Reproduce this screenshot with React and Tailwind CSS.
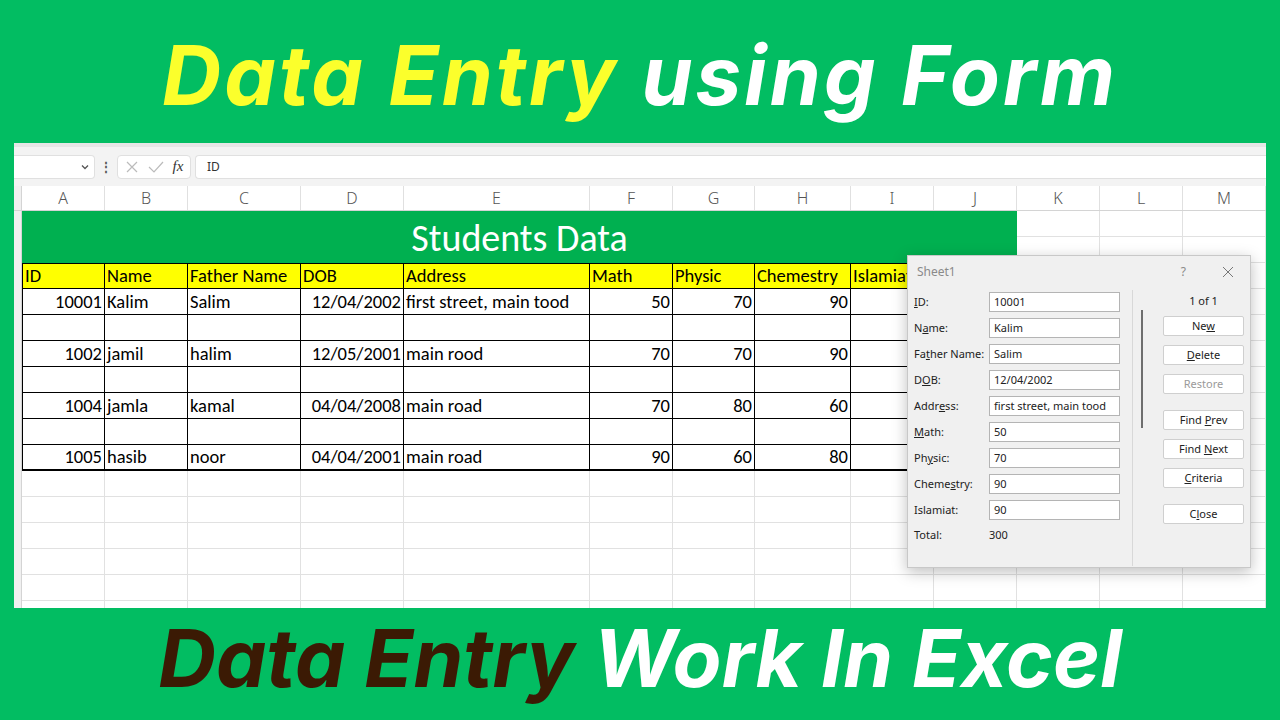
import React from "react";

const COLS = [
  { k: "A", w: 83 },
  { k: "B", w: 83 },
  { k: "C", w: 113 },
  { k: "D", w: 103 },
  { k: "E", w: 186 },
  { k: "F", w: 83 },
  { k: "G", w: 82 },
  { k: "H", w: 96 },
  { k: "I", w: 83 },
  { k: "J", w: 83 },
  { k: "K", w: 83 },
  { k: "L", w: 83 },
  { k: "M", w: 83 },
];

const HEAD = ["ID", "Name", "Father Name", "DOB", "Address", "Math", "Physic", "Chemestry", "Islamiat"];

const ROWS = [
  ["10001", "Kalim", "Salim", "12/04/2002", "first street, main tood", "50", "70", "90", ""],
  null,
  ["1002", "jamil", "halim", "12/05/2001", "main rood", "70", "70", "90", ""],
  null,
  ["1004", "jamla", "kamal", "04/04/2008", "main road", "70", "80", "60", ""],
  null,
  ["1005", "hasib", "noor", "04/04/2001", "main road", "90", "60", "80", ""],
];

const RIGHT = [0, 3, 5, 6, 7, 8];

const sheetFont = { fontFamily: "Carlito, Lato, 'Open Sans', sans-serif" };
const uiFont = { fontFamily: "'Noto Sans', 'Open Sans', sans-serif" };

function U({ children }) {
  return <span className="underline underline-offset-1">{children}</span>;
}

const FIELDS = [
  [<><U>I</U>D:</>, "10001"],
  [<>N<U>a</U>me:</>, "Kalim"],
  [<>Fa<U>t</U>her Name:</>, "Salim"],
  [<>D<U>O</U>B:</>, "12/04/2002"],
  [<>Addr<U>e</U>ss:</>, "first street, main tood"],
  [<><U>M</U>ath:</>, "50"],
  [<>Ph<U>y</U>sic:</>, "70"],
  [<>Cheme<U>s</U>try:</>, "90"],
  [<>Islamiat:</>, "90"],
];

function Btn({ children, disabled, className = "" }) {
  return (
    <div className={`w-[81px] h-[20px] bg-white border border-[#cfcfcf] rounded-[2px] flex items-center justify-center text-[11px] ${disabled ? "text-[#9a9a9a]" : "text-[#222]"} ${className}`}>
      <span className="whitespace-pre">{children}</span>
    </div>
  );
}

function DataForm() {
  return (
    <div className="absolute left-[893px] top-[112px] w-[344px] h-[313px] bg-[#f0f0f0] border border-[#c8c8c8] shadow-[0_4px_14px_rgba(0,0,0,0.25)]" style={uiFont}>
      <div className="h-[32px] flex items-center pl-[9px] pr-[16px] text-[12px] text-[#8a8a8a]">
        <span className="flex-1">Sheet1</span>
        <span className="mr-[36px]">?</span>
        <svg width="12" height="12" viewBox="0 0 12 12" className="stroke-[#777]" strokeWidth="1">
          <path d="M1 1 L11 11 M11 1 L1 11" />
        </svg>
      </div>
      <div className="flex">
        <div className="w-[224px] pl-[6px] pt-[4px] flex flex-col gap-[6px] text-[11px] text-[#222]">
          {FIELDS.map(([label, val], i) => (
            <div key={i} className="flex items-center h-[20px]">
              <div className="w-[75px] whitespace-nowrap">{label}</div>
              <div className="w-[131px] h-[20px] bg-white border border-[#b4b4b4] pl-[4px] flex items-center whitespace-nowrap overflow-hidden">{val}</div>
            </div>
          ))}
          <div className="flex items-center h-[20px] -mt-[1px]">
            <div className="w-[75px]">Total:</div>
            <div>300</div>
          </div>
        </div>
        <div className="w-px bg-[#d8d8d8] h-[276px] mt-[2px]" />
        <div className="w-[8px] relative">
          <div className="absolute left-[8px] top-[22px] w-[2px] h-[118px] bg-[#6e6e6e]" />
        </div>
        <div className="flex flex-col items-center pl-[22px] text-[11px] text-[#222]">
          <div className="h-[20px] mt-[3px] flex items-center">1 of 1</div>
          <Btn className="mt-[5px]">Ne<U>w</U></Btn>
          <Btn className="mt-[9px]"><U>D</U>elete</Btn>
          <Btn className="mt-[9px]" disabled>Restore</Btn>
          <Btn className="mt-[16px]">Find <U>P</U>rev</Btn>
          <Btn className="mt-[9px]">Find <U>N</U>ext</Btn>
          <Btn className="mt-[9px]"><U>C</U>riteria</Btn>
          <Btn className="mt-[16px]">C<U>l</U>ose</Btn>
        </div>
      </div>
    </div>
  );
}

function FormulaBar() {
  return (
    <div className="h-[43px] bg-[#f3f3f3] border-t-[4px] border-[#e6e6e6] flex items-center gap-[4px] text-[12px] text-[#333]" style={uiFont}>
      <div className="w-[81px] h-[24px] bg-white rounded-r-[4px] border border-l-0 border-[#e0e0e0] flex items-center justify-end pr-[4px]">
        <svg width="10" height="10" viewBox="0 0 10 10" fill="none" stroke="#555" strokeWidth="1.3"><path d="M2 3.5 L5 6.5 L8 3.5" /></svg>
      </div>
      <div className="w-[14px] flex justify-center text-[#555] font-bold">⋮</div>
      <div className="w-[74px] h-[24px] bg-white rounded-[4px] border border-[#e0e0e0] flex items-center justify-around px-[2px]">
        <svg width="14" height="14" viewBox="0 0 14 14" fill="none" stroke="#bbb" strokeWidth="1.2"><path d="M2 2 L12 12 M12 2 L2 12" /></svg>
        <svg width="16" height="14" viewBox="0 0 16 14" fill="none" stroke="#bbb" strokeWidth="1.2"><path d="M1 7 L6 12 L15 2" /></svg>
        <span className="italic text-[15px] text-[#333]" style={{ fontFamily: "'Liberation Serif', serif" }}>fx</span>
      </div>
      <div className="flex-1 h-[24px] bg-white rounded-l-[4px] border border-r-0 border-[#e0e0e0] flex items-center pl-[11px]">ID</div>
    </div>
  );
}

function ColHeaders() {
  return (
    <div className="flex h-[25px] bg-white border-b border-[#d4d4d4] text-[16px] text-[#555]" style={uiFont}>
      <div className="w-[8px] bg-[#f0f0f0] border-r border-[#d4d4d4]" />
      {COLS.map((c) => (
        <div key={c.k} style={{ width: c.w }} className="flex items-center justify-center border-r border-[#e0e0e0] font-light">{c.k}</div>
      ))}
    </div>
  );
}

function Grid() {
  return (
    <div className="text-[18.5px] text-black" style={sheetFont}>
      {/* Title row: merged A:J, two rows tall */}
      <div className="flex h-[52px]">
        <div className="w-[8px] bg-[#f0f0f0] border-r border-[#d4d4d4]" />
        <div className="w-[995px] bg-[#00b050] text-white text-[38px] flex items-center justify-center pt-[2px]">Students Data</div>
        <div className="flex flex-col">
          {[0, 1].map((r) => (
            <div key={r} className="flex h-[26px]">
              {COLS.slice(10).map((c) => (
                <div key={c.k} style={{ width: c.w }} className="border-r border-b border-[#e1e1e1]" />
              ))}
            </div>
          ))}
        </div>
      </div>
      {/* Header row */}
      <div className="flex h-[26px]">
        <div className="w-[8px] bg-[#f0f0f0] border-r border-[#d4d4d4]" />
        {COLS.map((c, i) =>
          i < 9 ? (
            <div key={c.k} style={{ width: c.w }} className={`bg-[#ffff00] border-t border-b border-r border-black flex items-center pl-[2px] whitespace-nowrap overflow-hidden ${i === 0 ? "border-l" : ""}`}>{HEAD[i]}</div>
          ) : (
            <div key={c.k} style={{ width: c.w }} className="border-r border-b border-[#e1e1e1]" />
          )
        )}
      </div>
      {ROWS.map((row, r) => (
        <div key={r} className="flex h-[26px]">
          <div className="w-[8px] bg-[#f0f0f0] border-r border-[#d4d4d4]" />
          {COLS.map((c, i) =>
            i < 9 ? (
              <div key={c.k} style={{ width: c.w }} className={`border-b border-r border-black flex items-center whitespace-nowrap overflow-hidden px-[2px] ${i === 0 ? "border-l" : ""} ${RIGHT.includes(i) ? "justify-end" : ""} ${r === ROWS.length - 1 ? "border-b-2" : ""}`}>
                {row ? row[i] : ""}
              </div>
            ) : (
              <div key={c.k} style={{ width: c.w }} className="border-r border-b border-[#e1e1e1]" />
            )
          )}
        </div>
      ))}
      {[0, 1, 2, 3, 4, 5].map((r) => (
        <div key={r} className="flex h-[26px]">
          <div className="w-[8px] bg-[#f0f0f0] border-r border-[#d4d4d4]" />
          {COLS.map((c) => (
            <div key={c.k} style={{ width: c.w }} className="border-r border-b border-[#e1e1e1]" />
          ))}
        </div>
      ))}
    </div>
  );
}

export default function App() {
  const titleFont = { fontFamily: "Inter, 'Open Sans', sans-serif" };
  return (
    <div className="w-[1280px] h-[720px] bg-[#02bd62] flex flex-col overflow-hidden">
      <div className="h-[143px] flex items-center justify-center pt-[8px]">
        <h1 className="text-[82px] leading-none font-bold italic tracking-[3px]" style={titleFont}>
          <span className="text-[#fbff2c]">Data Entry</span>{" "}
          <span className="text-white">using Form</span>
        </h1>
      </div>
      <div className="mx-[14px] h-[465px] bg-white relative overflow-hidden">
        <FormulaBar />
        <ColHeaders />
        <Grid />
        <DataForm />
      </div>
      <div className="flex-1 flex items-center justify-center pb-[12px]">
        <h2 className="text-[80px] leading-none font-bold italic tracking-[0px]" style={titleFont}>
          <span className="text-[#3b1a04]">Data Entry</span>{" "}
          <span className="text-white">Work In Excel</span>
        </h2>
      </div>
    </div>
  );
}
